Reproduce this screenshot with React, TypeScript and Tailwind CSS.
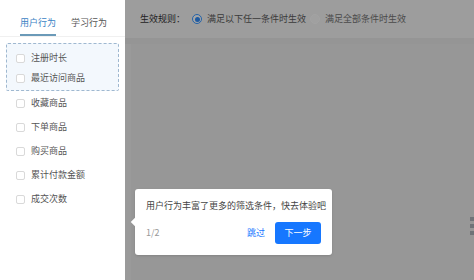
import { useState } from "react";

const items = ["收藏商品", "下单商品", "购买商品", "累计付款金额", "成交次数"];
const highlighted = ["注册时长", "最近访问商品"];

function CheckRow({ label, tight }: { label: string; tight?: boolean }) {
  return (
    <div className={"flex items-center gap-[6px] pl-[16px] " + (tight ? "h-[20px]" : "h-[24px]")}>
      <span className="w-[9px] h-[9px] rounded-[2px] border border-[#d9d9d9] bg-white" />
      <span className="text-[9px] text-[#555] whitespace-nowrap">{label}</span>
    </div>
  );
}

export default function App() {
  const [tab, setTab] = useState(0);

  return (
    <div
      className="flex w-[474px] h-[280px] overflow-hidden bg-[#999]"
      style={{ fontFamily: '"Noto Sans CJK SC", "Noto Sans", sans-serif' }}
    >
      {/* Sidebar stays above the mask */}
      <aside className="w-[125px] shrink-0 bg-white flex flex-col">
        <div className="flex gap-[15px] pl-[20px] pt-[12px] border-b border-[#f0f0f0] h-[37px]">
          {["用户行为", "学习行为"].map((t, i) => (
            <button
              key={t}
              onClick={() => setTab(i)}
              className={
                "text-[9px] h-[24px] border-b-2 leading-[14px] whitespace-nowrap " +
                (tab === i ? "text-[#3b82c4] border-[#6b9ab8]" : "text-[#555] border-transparent")
              }
            >
              {t}
            </button>
          ))}
        </div>

        <div className="mx-[6px] mt-[6px] pt-[4px] pb-[2px] border border-dashed border-[#9fb8d0] bg-[#f3f8fd] rounded-[2px]">
          {highlighted.map((l) => (
            <div key={l} className="-ml-[7px]">
              <CheckRow label={l} tight />
            </div>
          ))}
        </div>

        <div>
          {items.map((l) => (
            <CheckRow key={l} label={l} />
          ))}
        </div>
      </aside>

      {/* Masked main area */}
      <main className="flex-1 flex flex-col relative">
        <div className="h-[38px] bg-[#9d9d9d] flex items-center pl-[15px] text-[9px] whitespace-nowrap">
          <span className="text-[#222] w-[52px] shrink-0">生效规则：</span>
          <span className="w-[15px] shrink-0 flex">
            <span className="w-[10px] h-[10px] rounded-full border border-[#2463a8] bg-[#a6a6a6] flex items-center justify-center">
              <span className="w-[5px] h-[5px] rounded-full bg-[#1f5aa0]" />
            </span>
          </span>
          <span className="text-[#3a3a3a] w-[103px] shrink-0">满足以下任一条件时生效</span>
          <span className="w-[15px] shrink-0 flex">
            <span className="w-[10px] h-[10px] rounded-full border border-[#a3a3a3] bg-[#a0a0a0]" />
          </span>
          <span className="text-[#4a4a4a] shrink-0">满足全部条件时生效</span>
        </div>
        <div className="h-[6px] bg-[#959595]" />
        <div className="flex-1 bg-[#979797] border-l-[6px] border-[#9a9a9a]" />

        <div className="absolute right-0 top-[215px] w-[4px] h-[26px] flex flex-col gap-[3px] py-[2px]">
          <span className="h-[4px] bg-[#6f7378]" />
          <span className="h-[4px] bg-[#6f7378]" />
          <span className="h-[4px] bg-[#6f7378]" />
        </div>

        {/* Guide popover */}
        <div className="absolute left-[10px] top-[189px] w-[197px] h-[66px] bg-white rounded-[3px] shadow-sm px-[11px] pt-[11px]">
          <span className="absolute -left-[3px] top-[30px] w-[6px] h-[6px] bg-white rotate-45" />
          <p className="text-[9px] text-[#444] leading-[12px] whitespace-nowrap">
            用户行为丰富了更多的筛选条件，快去体验吧
          </p>
          <div className="flex items-center mt-[10px]">
            <span className="text-[9px] text-[#999]">1/2</span>
            <span className="ml-auto text-[9px] text-[#1677ff] mr-[10px]">跳过</span>
            <button className="w-[46px] h-[22px] rounded-[3px] bg-[#1677ff] text-white text-[9px]">
              下一步
            </button>
          </div>
        </div>
      </main>
    </div>
  );
}
